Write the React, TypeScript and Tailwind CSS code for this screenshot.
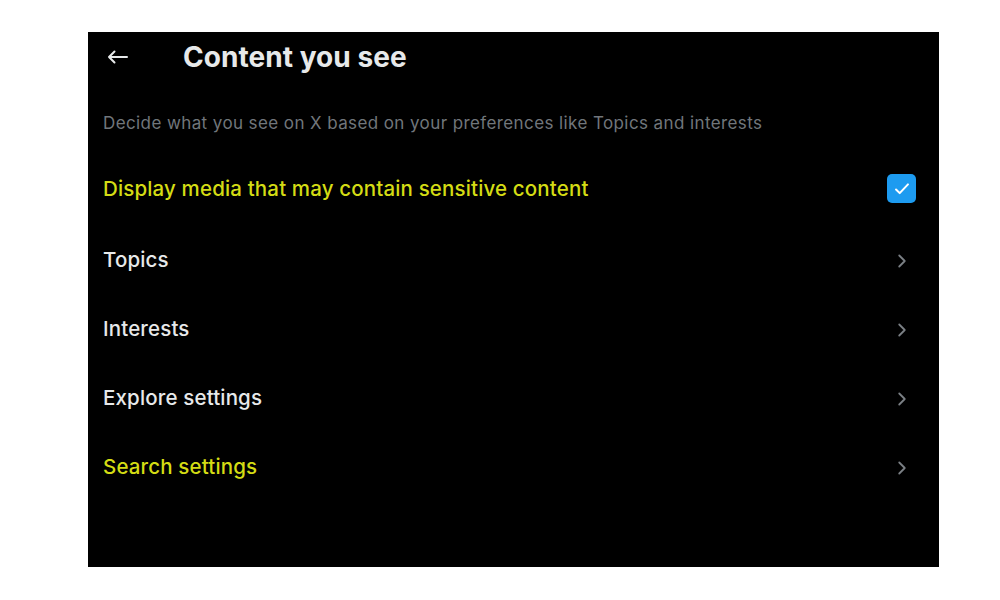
import { ChevronRight } from "lucide-react";

const ROWS = [
  { label: "Topics", yellow: false },
  { label: "Interests", yellow: false },
  { label: "Explore settings", yellow: false },
  { label: "Search settings", yellow: true },
];

export default function App() {
  return (
    <div className="min-h-[600px] w-[1000px] bg-white pt-[32px] pl-[88px] font-['Inter',sans-serif]">
      <div className="flex h-[535px] w-[851px] flex-col bg-black">
        <div className="flex h-[50px] items-center">
          <div className="flex w-[95px] items-center pl-[19px]">
            <svg width="21" height="14" viewBox="0 0 21 14" fill="none" stroke="#e7e9ea" strokeWidth="2" strokeLinecap="round" strokeLinejoin="round">
              <path d="M20 7H2M7.5 1.5 2 7l5.5 5.5" />
            </svg>
          </div>
          <h1 className="text-[28px] font-bold tracking-[0.05px] text-[#e7e9ea]">Content you see</h1>
        </div>

        <div className="flex h-[81px] items-center px-[15px] pt-[3px]">
          <p className="text-[17px] tracking-[0.4px] text-[#71767b]">
            Decide what you see on X based on your preferences like Topics and interests
          </p>
        </div>

        <div className="flex h-[63px] items-start justify-between pr-[23px] pl-[15px] pt-[11px]">
          <span className="text-[20.5px] font-medium tracking-[0.15px] text-[#d4dc14]">
            Display media that may contain sensitive content
          </span>
          <div className="flex h-[29px] w-[29px] items-center justify-center rounded-[5px] bg-[#1d9bf0]">
            <svg width="22" height="22" viewBox="0 0 24 24" fill="none" stroke="white" strokeWidth="2.2" strokeLinecap="round" strokeLinejoin="round">
              <path d="M5.5 12.5l4 4L18.5 7" />
            </svg>
          </div>
        </div>

        {ROWS.map((row) => (
          <div key={row.label} className="flex h-[69px] items-center justify-between pr-[26px] pl-[15px]">
            <span className={`text-[20.5px] font-medium tracking-[0.15px] ${row.yellow ? "text-[#d4dc14]" : "text-[#e7e9ea]"}`}>
              {row.label}
            </span>
            <ChevronRight size={22} strokeWidth={2} color="#7a7f84" />
          </div>
        ))}
      </div>
    </div>
  );
}
